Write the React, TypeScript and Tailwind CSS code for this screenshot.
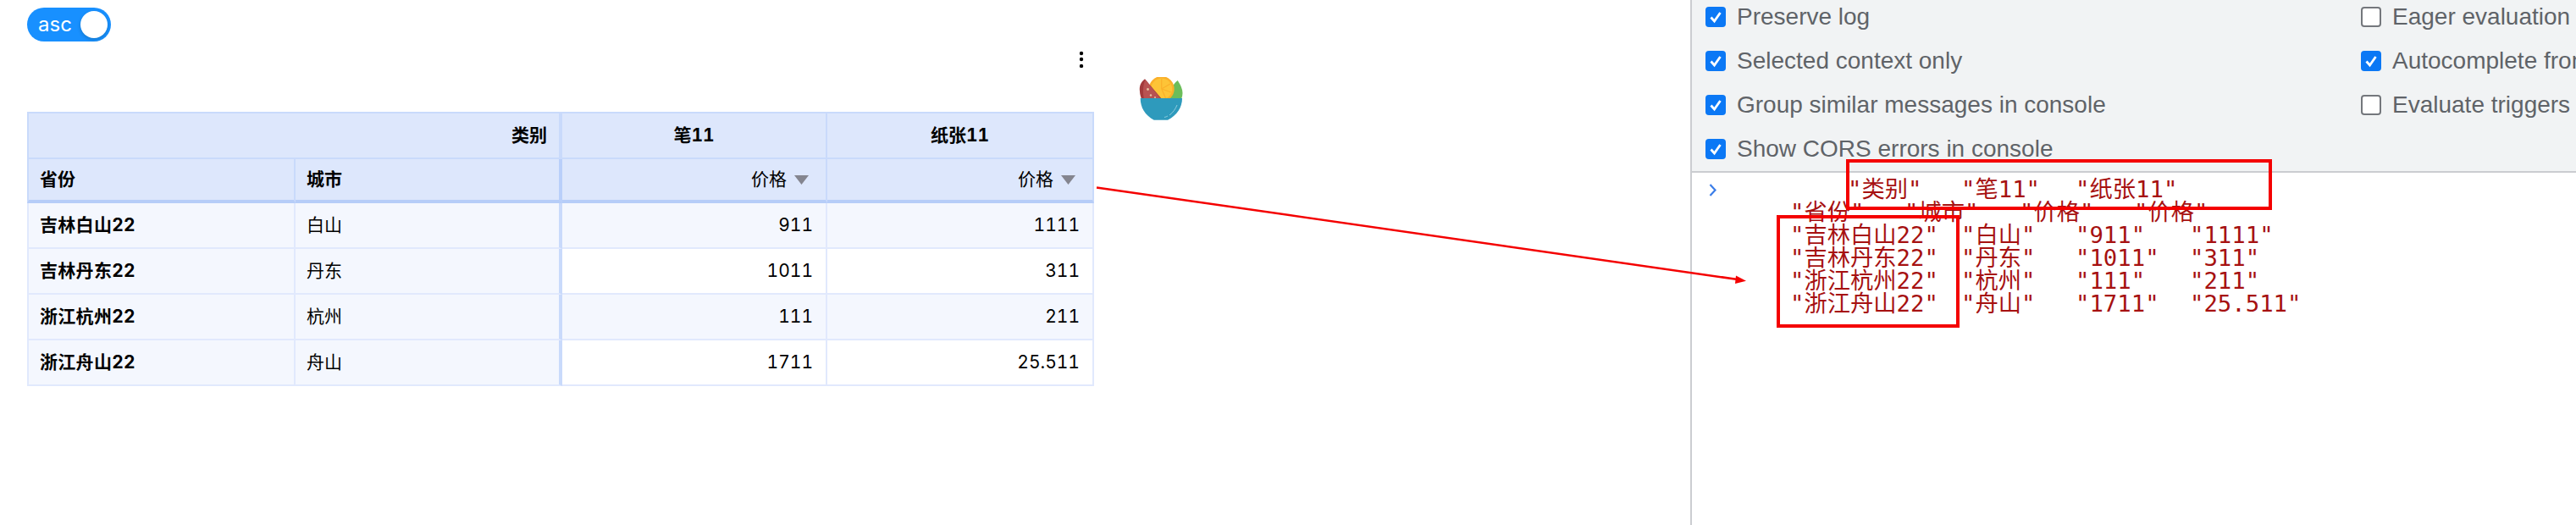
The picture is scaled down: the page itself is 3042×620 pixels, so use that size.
import React from 'react'

const cjk = "font-['Inter','Noto_Sans_CJK_SC',sans-serif] tabular-nums"

const rows = [
  ['吉林白山22', '白山', '911', '1111'],
  ['吉林丹东22', '丹东', '1011', '311'],
  ['浙江杭州22', '杭州', '111', '211'],
  ['浙江舟山22', '舟山', '1711', '25.511'],
]

const SortIcon = () => (
  <svg width="17" height="11" viewBox="0 0 17 11" className="ml-[9px] mr-[20px]">
    <path d="M0 0h17L8.500 11z" fill="#84858f" />
  </svg>
)

const HeadCell = ({ className, children }: { className: string; children: React.ReactNode }) => (
  <div className={`flex items-center bg-[#dde7fc] text-[21px] text-black ${className}`}>{children}</div>
)

const PivotTable = () => (
  <div className={`grid grid-cols-[317px_315px_313px_315px] grid-rows-[56px_52px_54px_54px_54px_54px] ${cjk}`}>
    <HeadCell className="col-span-2 justify-end border-t-2 border-l-2 border-b-2 border-r-4 border-[#c9dafb] pr-[14px] font-bold">类别</HeadCell>
    <HeadCell className="justify-center border-t-2 border-b-2 border-r-2 border-[#c9dafb] font-bold">笔11</HeadCell>
    <HeadCell className="justify-center border-t-2 border-b-2 border-r-2 border-[#c9dafb] font-bold">纸张11</HeadCell>

    <HeadCell className="border-l-2 border-r-2 border-b-[4px] border-l-[#c9dafb] border-r-[#c9dafb] border-b-[#b6cdf8] pl-[13px] font-bold">省份</HeadCell>
    <HeadCell className="border-r-4 border-b-[4px] border-r-[#b9cffa] border-b-[#b6cdf8] pl-[13px] font-bold">城市</HeadCell>
    <HeadCell className="justify-end border-r-2 border-b-[4px] border-r-[#c9dafb] border-b-[#b6cdf8]">价格<SortIcon /></HeadCell>
    <HeadCell className="justify-end border-r-2 border-b-[4px] border-r-[#c9dafb] border-b-[#b6cdf8]">价格<SortIcon /></HeadCell>

    {rows.map((r, i) => (
      <React.Fragment key={r[0]}>
        <div className="flex items-center border-l-2 border-r-2 border-b-2 border-[#e1e9fd] bg-[#f4f7fe] pl-[13px] text-[21px] font-bold tracking-[0.3px] text-black">{r[0]}</div>
        <div className="flex items-center border-r-4 border-b-2 border-r-[#c9dafb] border-b-[#e1e9fd] bg-[#f4f7fe] pl-[13px] text-[21px] text-black">{r[1]}</div>
        <div className={`flex items-center justify-end border-r-2 border-b-2 border-[#e1e9fd] pr-[15px] text-[21px] text-black ${i % 2 === 0 ? 'bg-[#f4f7fe]' : 'bg-white'}`}>{r[2]}</div>
        <div className={`flex items-center justify-end border-r-2 border-b-2 border-[#e1e9fd] pr-[15px] text-[21px] text-black ${i % 2 === 0 ? 'bg-[#f4f7fe]' : 'bg-white'}`}>{r[3]}</div>
      </React.Fragment>
    ))}
  </div>
)

const FruitBowl = () => (
  <svg width="52" height="52" viewBox="0 0 52 52" className="absolute left-[1345px] top-[91px]">
    <path d="M45.700 4 C39 9 37 17 37 26 H50 C52 21 52 17 50 12 C49 9 47 6 45.700 4 Z" fill="#6cbd5a" />
    <circle cx="26.700" cy="14" r="15" fill="#fbb02a" />
    <circle cx="26.700" cy="14" r="12.500" fill="#fdc437" />
    <path d="M26.700 14 L26.700 2 M26.700 14 L37 8 M26.700 14 L38 18 M26.700 14 L32 26" stroke="#fbb02a" strokeWidth="1.200" fill="none" />
    <path d="M7 2.300 C2 6 0 11 1 17 C1 20 2 23 3 26 H27 Z" fill="#a33a3c" />
    <path d="M7.500 3 C5 9 4 17 6 26 H26 Z" fill="#b85252" />
    <circle cx="10.500" cy="14.500" r="1.400" fill="#e6c3a0" />
    <circle cx="14" cy="21.500" r="1.200" fill="#e6c3a0" />
    <circle cx="19" cy="24" r="1" fill="#e6c3a0" />
    <path d="M1.700 25 H51 C51 36 45 45 34 50.700 H17.700 C7 45 1.700 36 1.700 25 Z" fill="#2e9abc" />
    <path d="M30 47.500 C32 47 33 46.500 34 46 M36 45 C40 42 43 38 45 33" stroke="#9ad0e0" strokeWidth="0.900" fill="none" />
  </svg>
)

const DotsIcon = () => (
  <svg width="6" height="20" viewBox="0 0 6 20" className="mr-[12px]">
    <circle cx="3" cy="3" r="2.200" fill="#000" />
    <circle cx="3" cy="10" r="2.200" fill="#000" />
    <circle cx="3" cy="18" r="2.200" fill="#000" />
  </svg>
)

const Setting = ({ checked, label }: { checked: boolean; label: string }) => (
  <div className="flex h-6 items-center whitespace-nowrap">
    {checked ? (
      <span className="flex size-6 shrink-0 items-center justify-center rounded-[4px] bg-[#0b78f5]">
        <svg width="16" height="16" viewBox="0 0 16 16">
          <path d="M2.500 8.500l4 4.500 7-10" stroke="#fff" strokeWidth="2.800" fill="none" />
        </svg>
      </span>
    ) : (
      <span className="size-6 shrink-0 rounded-[4px] border-2 border-[#74777c] bg-white" />
    )}
    <span className="ml-[13px] font-['Liberation_Sans',sans-serif] text-[28px] leading-6 text-[#5f6368]">{label}</span>
  </div>
)

const consoleLines = [
  { start: 'ml-[68px]', cells: ['"类别"', '"笔11"', '"纸张11"'], widths: ['w-[134px]', 'w-[135px]', 'w-[135px]'] },
  { start: '', cells: ['"省份"', '"城市"', '"价格"', '"价格"'], widths: ['w-[135px]', 'w-[136px]', 'w-[135px]', 'w-[135px]'] },
  { start: '', cells: ['"吉林白山22"', '"白山"', '"911"', '"1111"'], widths: ['w-[202px]', 'w-[135px]', 'w-[135px]', 'w-[135px]'] },
  { start: '', cells: ['"吉林丹东22"', '"丹东"', '"1011"', '"311"'], widths: ['w-[202px]', 'w-[135px]', 'w-[135px]', 'w-[135px]'] },
  { start: '', cells: ['"浙江杭州22"', '"杭州"', '"111"', '"211"'], widths: ['w-[202px]', 'w-[135px]', 'w-[135px]', 'w-[135px]'] },
  { start: '', cells: ['"浙江舟山22"', '"舟山"', '"1711"', '"25.511"'], widths: ['w-[202px]', 'w-[135px]', 'w-[135px]', 'w-[135px]'] },
]

const Annotations = () => (
  <>
    <div className="absolute left-[2180px] top-[188px] h-[60px] w-[503px] border-[4px] border-[#f40000]" />
    <div className="absolute left-[2098px] top-[254px] h-[133px] w-[216px] border-[4px] border-[#f40000]" />
    <svg width="3042" height="620" className="pointer-events-none absolute left-0 top-0">
      <path d="M1295 221.500 L2052 330" stroke="#f40000" strokeWidth="2.500" fill="none" />
      <path d="M2062 331.700 L2050 325.500 L2049 335 Z" fill="#f40000" />
    </svg>
  </>
)

export default function App() {
  return (
    <div className="relative flex h-[620px] w-[3042px] overflow-hidden bg-white">
      <div className="w-[1996px] shrink-0 pl-[32px] pt-[9px]">
        <button className="flex h-10 w-[99px] items-center justify-between rounded-full bg-[#1890ff] pl-[13px] pr-1 font-['Inter',sans-serif] text-[24px] text-white">
          asc
          <span className="size-8 rounded-full bg-white shadow-[0_2px_4px_rgba(0,35,11,0.2)]" />
        </button>
        <div className="flex h-[83px] w-[1260px] items-start justify-end pt-[11px]">
          <DotsIcon />
        </div>
        <PivotTable />
      </div>

      <div className="flex min-w-0 flex-1 flex-col border-l-2 border-[#cbcdd1]">
        <div className="flex h-[204px] shrink-0 overflow-hidden border-b-2 border-[#cbcdd1] bg-[#f1f3f4] pl-[16px] pt-2">
          <div className="flex w-[774px] shrink-0 flex-col gap-[28px]">
            <Setting checked label="Preserve log" />
            <Setting checked label="Selected context only" />
            <Setting checked label="Group similar messages in console" />
            <Setting checked label="Show CORS errors in console" />
          </div>
          <div className="flex flex-col gap-[28px]">
            <Setting checked={false} label="Eager evaluation" />
            <Setting checked label="Autocomplete from history" />
            <Setting checked={false} label="Evaluate triggers user activation" />
          </div>
        </div>
        <div className="flex flex-1 pl-[20px] pt-[6px]">
          <svg width="10" height="15" viewBox="0 0 10 15" className="mt-[7px] shrink-0">
            <path d="M1.500 1l6 6.500-6 6.500" stroke="#3b7de8" strokeWidth="2.200" fill="none" />
          </svg>
          <div className="ml-[86px] font-['DejaVu_Sans_Mono','Noto_Sans_CJK_SC',monospace] text-[27.3px] leading-[27px] text-[#a61111]">
            {consoleLines.map(line => (
              <div key={line.cells[0]} className={`flex h-[27px] whitespace-pre ${line.start}`}>
                {line.cells.map((c, i) => (
                  <span key={i} className={line.widths[i]}>{c}</span>
                ))}
              </div>
            ))}
          </div>
        </div>
      </div>

      <FruitBowl />
      <Annotations />
    </div>
  )
}
